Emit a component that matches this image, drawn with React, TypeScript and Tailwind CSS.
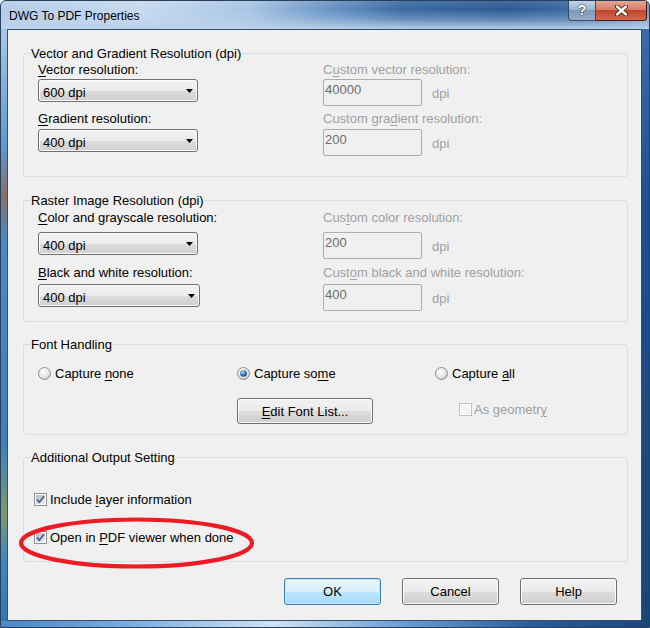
import React from 'react';

const U: React.FC<{ children: React.ReactNode }> = ({ children }) => (
  <span className="underline underline-offset-[2px] decoration-1">{children}</span>
);

const ComboArrow = () => (
  <svg width="7" height="4" viewBox="0 0 7 4">
    <polygon points="0,0 7,0 3.5,4" fill="#000" />
  </svg>
);

const Combo: React.FC<{ value: string; w?: string }> = ({ value, w = 'w-[160px]' }) => (
  <div className={`${w} h-[23px] flex items-center justify-between pl-[4px] pr-[4px] border border-[#707070] rounded-[3px] bg-[linear-gradient(to_bottom,#f2f2f2_0%,#ebebeb_50%,#dddddd_51%,#cfcfcf_100%)] shadow-[inset_0_0_0_1px_#fbfbfb]`}>
    <span className="pt-[3px]">{value}</span>
    <ComboArrow />
  </div>
);

const Field: React.FC<{ value: string }> = ({ value }) => (
  <div className="flex items-center">
    <div className="w-[99px] h-[27px] border border-[#adadad] rounded-[2px] pl-[1px] pt-[2px] leading-[16px] text-[#6d6d6d]">{value}</div>
    <span className="ml-[10px] pt-[1px] text-[#a0a0a0]">dpi</span>
  </div>
);

const Group: React.FC<{ title: string; className?: string; children: React.ReactNode }> = ({ title, className = '', children }) => (
  <fieldset className={`border border-[#d5dfe5] rounded-[3px] ${className}`}>
    <legend className="ml-[6px] px-[1px] leading-[15px]">{title}</legend>
    {children}
  </fieldset>
);

const Radio: React.FC<{ checked?: boolean }> = ({ checked }) => (
  <svg width="13" height="13" viewBox="0 0 13 13">
    <defs>
      <radialGradient id="radioFill" cx="0.4" cy="0.35" r="0.75">
        <stop offset="0" stopColor="#ffffff" />
        <stop offset="0.6" stopColor="#e6e6e6" />
        <stop offset="1" stopColor="#b9b9b9" />
      </radialGradient>
      <radialGradient id="radioDot" cx="0.4" cy="0.35" r="0.7">
        <stop offset="0" stopColor="#bfe2ff" />
        <stop offset="0.5" stopColor="#2a82d4" />
        <stop offset="1" stopColor="#0c3d78" />
      </radialGradient>
    </defs>
    <circle cx="6.5" cy="6.5" r="6" fill="url(#radioFill)" stroke="#8e8f8f" />
    {checked && <circle cx="6.5" cy="6.5" r="3.3" fill="url(#radioDot)" />}
  </svg>
);

const Check: React.FC<{ checked?: boolean; disabled?: boolean }> = ({ checked, disabled }) => (
  <svg width="13" height="13" viewBox="0 0 13 13">
    <defs>
      <linearGradient id="checkFill" x1="0" y1="0" x2="1" y2="1">
        <stop offset="0" stopColor="#b4b8bd" />
        <stop offset="1" stopColor="#f0f0f1" />
      </linearGradient>
    </defs>
    <rect x="0.5" y="0.5" width="12" height="12" fill="#fff" stroke={disabled ? '#c0c0c0' : '#8e8f8f'} />
    <rect x="2" y="2" width="9" height="9" fill={disabled ? '#f4f4f4' : 'url(#checkFill)'} />
    {checked && <path d="M3 6.5 L5.3 9.2 L10 3.2" fill="none" stroke="#4a5f97" strokeWidth="1.8" />}
  </svg>
);

const Button: React.FC<{ children: React.ReactNode; primary?: boolean; w?: string; h?: string }> = ({ children, primary, w = 'w-[97px]', h = 'h-[27px]' }) => (
  <div
    className={`${w} ${h} flex items-center justify-center rounded-[3px] border ${
      primary
        ? 'border-[#3c7fb1] bg-[linear-gradient(to_bottom,#eaf6fd_0%,#d9f0fc_50%,#bee6fd_51%,#a7d9f5_100%)] shadow-[inset_0_0_0_1px_#c4e5f8]'
        : 'border-[#707070] bg-[linear-gradient(to_bottom,#f2f2f2_0%,#ebebeb_50%,#dddddd_51%,#cfcfcf_100%)] shadow-[inset_0_0_0_1px_#fbfbfb]'
    }`}
  >
    {children}
  </div>
);

const Row: React.FC<{ left: React.ReactNode; right: React.ReactNode; className?: string }> = ({ left, right, className = '' }) => (
  <div className={`flex items-start ${className}`}>
    <div className="w-[285px]">{left}</div>
    <div>{right}</div>
  </div>
);

const Dim: React.FC<{ children: React.ReactNode }> = ({ children }) => (
  <span className="text-[#a0a0a0]">{children}</span>
);

export default function App() {
  return (
    <div className="relative w-[650px] h-[628px] overflow-hidden rounded-t-[6px] border border-[#2a3f58] bg-[#3f7cbd] font-['Liberation_Sans',Arial,sans-serif] text-[13px] leading-[15px] text-black">
      {/* Title bar */}
      <div className="flex h-[28px] bg-[linear-gradient(to_bottom,rgba(255,255,255,0.1)_0%,rgba(255,255,255,0)_30%,rgba(190,212,236,0.35)_65%,rgba(188,210,234,0.95)_100%),linear-gradient(to_right,#b4cde8_0%,#c6daef_22%,#a9c6e5_38%,#6d97c6_50%,#3a6aa3_62%,#2c5b95_78%,#3d6ca5_90%,#6f98c6_100%)]">
        <span className="pl-[8px] pt-[8px] text-[12px] leading-[14px]">DWG To PDF Properties</span>
        <div className="ml-auto mr-[2px] flex self-start">
          <div className="w-[28px] h-[20px] flex items-center justify-center rounded-bl-[4px] border border-t-0 border-[#3b4b60] bg-[linear-gradient(to_bottom,#c4d3e5_0%,#9fb4cd_45%,#7e98b8_50%,#95adca_100%)] text-[14px] font-bold text-white [text-shadow:0_0_2px_#1f2c3c,0_0_1px_#1f2c3c]">?</div>
          <div className="w-[51px] h-[20px] flex items-center justify-center rounded-br-[4px] border border-t-0 border-l-0 border-[#4e1c14] bg-[linear-gradient(to_bottom,#e7a797_0%,#d77d68_45%,#c2432b_50%,#d3694f_100%)]">
            <svg width="13" height="11" viewBox="0 0 13 11">
              <path d="M2 1.5 L11 9.5 M11 1.5 L2 9.5" stroke="#4a1a10" strokeWidth="4.2" strokeLinecap="round" />
              <path d="M2 1.5 L11 9.5 M11 1.5 L2 9.5" stroke="#ffffff" strokeWidth="2.4" strokeLinecap="round" />
            </svg>
          </div>
        </div>
      </div>

      <div className="flex h-[592px]">
        <div className="w-[6px] bg-[linear-gradient(to_bottom,#a9c6e5_0%,#5e98cf_20%,#8a7068_28%,#4a8ac6_36%,#3b80c2_70%,#7d9a6c_82%,#3f86c8_90%,#2f76bb_100%)]" />

        {/* Client area */}
        <div className="w-[635px] flex flex-col border border-[#34506e] bg-[#f0f0f0] pl-[15px] pr-[13px]">
          {/* Vector and Gradient */}
          <Group title="Vector and Gradient Resolution (dpi)" className="mt-[16px]">
            <div className="pl-[14px] pb-[20px]">
              <Row
                className="mt-[1px]"
                left={<span><U>V</U>ector resolution:</span>}
                right={<Dim>C<U>u</U>stom vector resolution:</Dim>}
              />
              <Row className="mt-[2px]" left={<Combo value="600 dpi" />} right={<Field value="40000" />} />
              <Row
                className="mt-[5px]"
                left={<span><U>G</U>radient resolution:</span>}
                right={<Dim>Custom gra<U>d</U>ient resolution:</Dim>}
              />
              <Row className="mt-[3px]" left={<Combo value="400 dpi" />} right={<Field value="200" />} />
            </div>
          </Group>

          {/* Raster */}
          <Group title="Raster Image Resolution (dpi)" className="mt-[16px]">
            <div className="pl-[14px] pb-[10px]">
              <Row
                className="mt-[2px]"
                left={<span><U>C</U>olor and grayscale resolution:</span>}
                right={<Dim>Cus<U>t</U>om color resolution:</Dim>}
              />
              <Row className="mt-[7px]" left={<Combo value="400 dpi" />} right={<Field value="200" />} />
              <Row
                className="mt-[6px]"
                left={<span><U>B</U>lack and white resolution:</span>}
                right={<Dim>Cust<U>o</U>m black and white resolution:</Dim>}
              />
              <Row className="mt-[4px]" left={<Combo value="400 dpi" w="w-[162px]" />} right={<Field value="400" />} />
            </div>
          </Group>

          {/* Font Handling */}
          <Group title="Font Handling" className="mt-[15px]">
            <div className="pl-[14px] pb-[10px]">
              <div className="grid grid-cols-[199px_198px_1fr] mt-[14px]">
                <div className="flex items-center gap-[4px]">
                  <Radio />
                  <span>Capture <U>n</U>one</span>
                </div>
                <div className="flex items-center gap-[4px]">
                  <Radio checked />
                  <span>Capture so<U>m</U>e</span>
                </div>
                <div className="flex items-center gap-[4px]">
                  <Radio />
                  <span>Capture <U>a</U>ll</span>
                </div>
              </div>
              <div className="grid grid-cols-[199px_198px_1fr] mt-[17px] items-center">
                <div />
                <Button w="w-[136px]" h="h-[26px]">
                  <span><U>E</U>dit Font List...</span>
                </Button>
                <div className="flex items-center gap-[2px] pl-[24px] pb-[4px] text-[#a0a0a0]">
                  <Check disabled />
                  <span>As geometr<U>y</U></span>
                </div>
              </div>
            </div>
          </Group>

          {/* Additional Output */}
          <Group title="Additional Output Setting" className="mt-[15px]">
            <div className="pl-[10px] pb-[16px]">
              <div className="flex items-center gap-[3px] mt-[27px]">
                <Check checked />
                <span>Include <U>l</U>ayer information</span>
              </div>
              <div className="flex items-center gap-[3px] mt-[23px]">
                <Check checked />
                <span>Open in <U>P</U>DF viewer when done</span>
              </div>
            </div>
          </Group>

          {/* Buttons */}
          <div className="flex justify-end gap-[21px] mt-[16px] pr-[11px]">
            <Button primary>OK</Button>
            <Button>Cancel</Button>
            <Button>Help</Button>
          </div>
        </div>

        <div className="w-[7px] bg-[linear-gradient(to_bottom,#3c6ca6_0%,#1f5088_30%,#1b4678_100%)]" />
      </div>

      <div className="h-[6px] bg-[linear-gradient(to_right,#4a87c4_0%,#7aaedd_20%,#cfe2f4_42%,#6a9ed2_62%,#2a5c96_82%,#1c4679_100%)]" />

      {/* Red annotation ellipse */}
      <svg className="absolute left-[13px] top-[512px] pointer-events-none" width="246" height="62" viewBox="0 0 246 62">
        <ellipse cx="122.5" cy="30" rx="115.5" ry="23.5" fill="none" stroke="#ed1c24" strokeWidth="4.2" />
      </svg>
    </div>
  );
}
